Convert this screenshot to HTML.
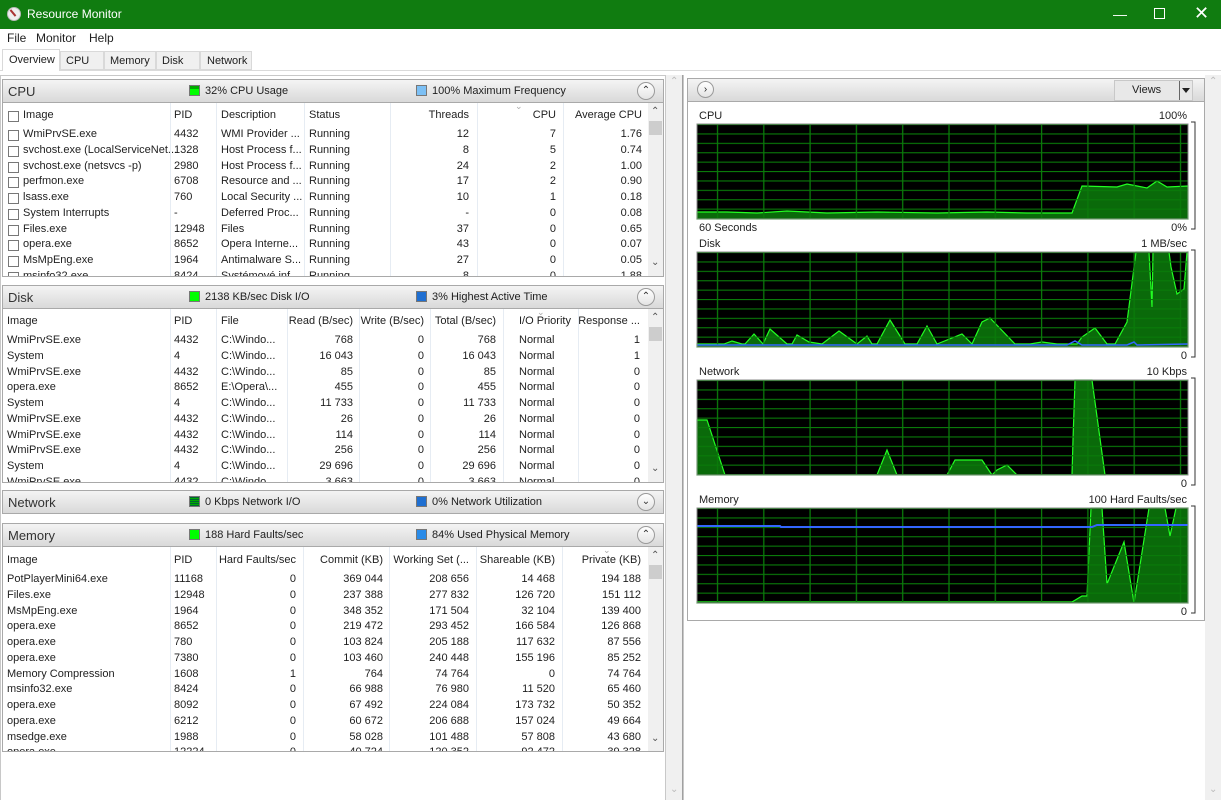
<!DOCTYPE html>
<html><head><meta charset="utf-8"><style>
*{margin:0;padding:0;box-sizing:border-box}
body{width:1221px;height:800px;position:relative;overflow:hidden;background:#fff;font-family:"Liberation Sans",sans-serif;font-size:11px;color:#1e1e1e}
.a{position:absolute;white-space:nowrap}
.hdr{position:absolute;left:2px;width:662px;height:24px;background:linear-gradient(#f4f4f4,#d9d9d9);border:1px solid #a9a9a9;}
.hdr .t{position:absolute;left:5px;top:4px;font-size:13px;color:#333}
.hdr .s{position:absolute;top:5px;font-size:11px}
.sq{position:absolute;top:5px;width:11px;height:11px;border:1px solid #777}
.btn{position:absolute;right:8px;top:2px;width:18px;height:18px;border-radius:50%;border:1px solid #9a9a9a;background:linear-gradient(#fff,#e4e4e4);font-size:10px;text-align:center;line-height:15px;color:#333}
.tbl{position:absolute;left:2px;width:662px;overflow:hidden;background:#fff;border-left:1px solid #a9a9a9;border-right:1px solid #a9a9a9;border-bottom:1px solid #a9a9a9}
.r{position:absolute;left:0;width:646px;height:16px}
.r span{position:absolute;white-space:nowrap;top:1px}
.dv{position:absolute;top:0;width:1px;background:#e6ecf3}
.sb{position:absolute;right:0;top:0;width:15px;background:#f0f0f0}
.cb{display:inline-block;width:11px;height:11px;border:1px solid #777;background:#fff}
.c1{left:5px;top:3px!important}.c2{left:20px}.c3{left:171px}.c4{left:218px}.c5{left:306px}
.c6{left:386px;width:80px;text-align:right}.c7{left:473px;width:80px;text-align:right}.c8{left:559px;width:80px;text-align:right}
.d1{left:4px}.d2{left:171px}.d3{left:218px}.d4{left:270px;width:80px;text-align:right}.d5{left:341px;width:80px;text-align:right}.d6{left:413px;width:80px;text-align:right}.d7{left:516px}.d8{left:557px;width:80px;text-align:right}
.m1{left:4px}.m2{left:171px}.m3{left:213px;width:80px;text-align:right}.m4{left:300px;width:80px;text-align:right}.m5{left:386px;width:80px;text-align:right}.m6{left:472px;width:80px;text-align:right}.m7{left:558px;width:80px;text-align:right}
</style></head><body>
<div class="a" style="left:0;top:0;width:1221px;height:29px;background:#107c10"></div>
<div class="a" style="left:7px;top:7px;width:14px;height:14px;border-radius:50%;background:#eee;border:1px solid #bbb"></div>
<div class="a" style="left:12px;top:9px;width:2px;height:8px;background:#a33;transform:rotate(-40deg)"></div>
<div class="a" style="left:27px;top:7px;color:#fff;font-size:12px">Resource Monitor</div>
<div class="a" style="left:1113px;top:6px;color:#fff;font-size:14px">&#8212;</div>
<div class="a" style="left:1154px;top:8px;width:11px;height:11px;border:1px solid #fff"></div>
<div class="a" style="left:1194px;top:3px;color:#fff;font-size:18px">&#10005;</div>
<div class="a" style="left:7px;top:31px;font-size:12px">File</div>
<div class="a" style="left:36px;top:31px;font-size:12px">Monitor</div>
<div class="a" style="left:89px;top:31px;font-size:12px">Help</div>
<div class="a" style="left:0;top:70px;width:1221px;height:1px;background:#dadada"></div>
<div class="a" style="left:2px;top:49px;width:58px;height:22px;background:#fff;border:1px solid #d9d9d9;border-bottom:none;padding:4px 0 0 6px">Overview</div>
<div class="a" style="left:60px;top:51px;width:44px;height:19px;background:#f0f0f0;border:1px solid #d9d9d9;padding:3px 0 0 5px">CPU</div>
<div class="a" style="left:104px;top:51px;width:52px;height:19px;background:#f0f0f0;border:1px solid #d9d9d9;padding:3px 0 0 5px">Memory</div>
<div class="a" style="left:156px;top:51px;width:44px;height:19px;background:#f0f0f0;border:1px solid #d9d9d9;padding:3px 0 0 5px">Disk</div>
<div class="a" style="left:200px;top:51px;width:52px;height:19px;background:#f0f0f0;border:1px solid #d9d9d9;padding:3px 0 0 6px">Network</div>

<div class="a" style="left:0;top:75px;width:666px;height:725px;border:1px solid #c8c8c8;border-bottom:none"></div>
<div class="a" style="left:666px;top:75px;width:17px;height:725px;background:#f0f0f0;border-right:1px solid #a0a0a0"></div>
<div class="a" style="left:670px;top:76px;color:#bbb;font-size:10px">&#8963;</div>
<div class="a" style="left:670px;top:784px;color:#bbb;font-size:10px">&#8964;</div>

<div class="hdr" style="top:79px"><div class="t">CPU</div>
<div class="sq" style="left:186px;background:linear-gradient(#0a0 0 35%,#0f0 35%)"></div><div class="s" style="left:202px">32% CPU Usage</div>
<div class="sq" style="left:413px;background:#7cc0f5"></div><div class="s" style="left:429px">100% Maximum Frequency</div>
<div class="btn">&#8963;</div></div>
<div class="tbl" style="top:103px;height:174px">
<div class="dv" style="left:167px;height:174px"></div><div class="dv" style="left:213px;height:174px"></div><div class="dv" style="left:301px;height:174px"></div><div class="dv" style="left:387px;height:174px"></div><div class="dv" style="left:474px;height:174px"></div><div class="dv" style="left:560px;height:174px"></div>
<div class="a" style="left:512px;top:-2px;color:#aaa;font-size:9px">&#8964;</div>
<div class="r" style="top:5px"><span class="c1"><i class="cb"></i></span><span class="c2">Image</span><span class="c3">PID</span><span class="c4">Description</span><span class="c5">Status</span><span class="c6">Threads</span><span class="c7">CPU</span><span class="c8">Average CPU</span></div>
<div class="r" style="top:24px"><span class="c1"><i class="cb"></i></span><span class="c2">WmiPrvSE.exe</span><span class="c3">4432</span><span class="c4">WMI Provider ...</span><span class="c5">Running</span><span class="c6">12</span><span class="c7">7</span><span class="c8">1.76</span></div>
<div class="r" style="top:40px"><span class="c1"><i class="cb"></i></span><span class="c2">svchost.exe (LocalServiceNet...</span><span class="c3">1328</span><span class="c4">Host Process f...</span><span class="c5">Running</span><span class="c6">8</span><span class="c7">5</span><span class="c8">0.74</span></div>
<div class="r" style="top:56px"><span class="c1"><i class="cb"></i></span><span class="c2">svchost.exe (netsvcs -p)</span><span class="c3">2980</span><span class="c4">Host Process f...</span><span class="c5">Running</span><span class="c6">24</span><span class="c7">2</span><span class="c8">1.00</span></div>
<div class="r" style="top:71px"><span class="c1"><i class="cb"></i></span><span class="c2">perfmon.exe</span><span class="c3">6708</span><span class="c4">Resource and ...</span><span class="c5">Running</span><span class="c6">17</span><span class="c7">2</span><span class="c8">0.90</span></div>
<div class="r" style="top:87px"><span class="c1"><i class="cb"></i></span><span class="c2">lsass.exe</span><span class="c3">760</span><span class="c4">Local Security ...</span><span class="c5">Running</span><span class="c6">10</span><span class="c7">1</span><span class="c8">0.18</span></div>
<div class="r" style="top:103px"><span class="c1"><i class="cb"></i></span><span class="c2">System Interrupts</span><span class="c3">-</span><span class="c4">Deferred Proc...</span><span class="c5">Running</span><span class="c6">-</span><span class="c7">0</span><span class="c8">0.08</span></div>
<div class="r" style="top:119px"><span class="c1"><i class="cb"></i></span><span class="c2">Files.exe</span><span class="c3">12948</span><span class="c4">Files</span><span class="c5">Running</span><span class="c6">37</span><span class="c7">0</span><span class="c8">0.65</span></div>
<div class="r" style="top:134px"><span class="c1"><i class="cb"></i></span><span class="c2">opera.exe</span><span class="c3">8652</span><span class="c4">Opera Interne...</span><span class="c5">Running</span><span class="c6">43</span><span class="c7">0</span><span class="c8">0.07</span></div>
<div class="r" style="top:150px"><span class="c1"><i class="cb"></i></span><span class="c2">MsMpEng.exe</span><span class="c3">1964</span><span class="c4">Antimalware S...</span><span class="c5">Running</span><span class="c6">27</span><span class="c7">0</span><span class="c8">0.05</span></div>
<div class="r" style="top:166px"><span class="c1"><i class="cb"></i></span><span class="c2">msinfo32.exe</span><span class="c3">8424</span><span class="c4">Systémové inf...</span><span class="c5">Running</span><span class="c6">8</span><span class="c7">0</span><span class="c8">1.88</span></div>
<div class="sb" style="height:174px"><div class="a" style="left:3px;top:3px;color:#555;font-size:10px">&#8963;</div><div class="a" style="left:1px;top:18px;width:13px;height:14px;background:#cdcdcd"></div><div class="a" style="left:3px;top:154px;color:#555;font-size:10px">&#8964;</div></div>
</div>

<div class="hdr" style="top:285px"><div class="t">Disk</div>
<div class="sq" style="left:186px;background:#0f0"></div><div class="s" style="left:202px">2138 KB/sec Disk I/O</div>
<div class="sq" style="left:413px;background:#1f6fd1"></div><div class="s" style="left:429px">3% Highest Active Time</div>
<div class="btn">&#8963;</div></div>
<div class="tbl" style="top:309px;height:174px">
<div class="dv" style="left:167px;height:174px"></div><div class="dv" style="left:213px;height:174px"></div><div class="dv" style="left:284px;height:174px"></div><div class="dv" style="left:356px;height:174px"></div><div class="dv" style="left:427px;height:174px"></div><div class="dv" style="left:500px;height:174px"></div><div class="dv" style="left:575px;height:174px"></div>
<div class="a" style="left:534px;top:-2px;color:#aaa;font-size:9px">&#8964;</div>
<div class="r" style="top:5px"><span class="d1">Image</span><span class="d2">PID</span><span class="d3">File</span><span class="d4">Read (B/sec)</span><span class="d5">Write (B/sec)</span><span class="d6">Total (B/sec)</span><span class="d7">I/O Priority</span><span class="d8">Response ...</span></div>
<div class="r" style="top:24px"><span class="d1">WmiPrvSE.exe</span><span class="d2">4432</span><span class="d3">C:\Windo...</span><span class="d4">768</span><span class="d5">0</span><span class="d6">768</span><span class="d7">Normal</span><span class="d8">1</span></div>
<div class="r" style="top:40px"><span class="d1">System</span><span class="d2">4</span><span class="d3">C:\Windo...</span><span class="d4">16 043</span><span class="d5">0</span><span class="d6">16 043</span><span class="d7">Normal</span><span class="d8">1</span></div>
<div class="r" style="top:56px"><span class="d1">WmiPrvSE.exe</span><span class="d2">4432</span><span class="d3">C:\Windo...</span><span class="d4">85</span><span class="d5">0</span><span class="d6">85</span><span class="d7">Normal</span><span class="d8">0</span></div>
<div class="r" style="top:71px"><span class="d1">opera.exe</span><span class="d2">8652</span><span class="d3">E:\Opera\...</span><span class="d4">455</span><span class="d5">0</span><span class="d6">455</span><span class="d7">Normal</span><span class="d8">0</span></div>
<div class="r" style="top:87px"><span class="d1">System</span><span class="d2">4</span><span class="d3">C:\Windo...</span><span class="d4">11 733</span><span class="d5">0</span><span class="d6">11 733</span><span class="d7">Normal</span><span class="d8">0</span></div>
<div class="r" style="top:103px"><span class="d1">WmiPrvSE.exe</span><span class="d2">4432</span><span class="d3">C:\Windo...</span><span class="d4">26</span><span class="d5">0</span><span class="d6">26</span><span class="d7">Normal</span><span class="d8">0</span></div>
<div class="r" style="top:119px"><span class="d1">WmiPrvSE.exe</span><span class="d2">4432</span><span class="d3">C:\Windo...</span><span class="d4">114</span><span class="d5">0</span><span class="d6">114</span><span class="d7">Normal</span><span class="d8">0</span></div>
<div class="r" style="top:134px"><span class="d1">WmiPrvSE.exe</span><span class="d2">4432</span><span class="d3">C:\Windo...</span><span class="d4">256</span><span class="d5">0</span><span class="d6">256</span><span class="d7">Normal</span><span class="d8">0</span></div>
<div class="r" style="top:150px"><span class="d1">System</span><span class="d2">4</span><span class="d3">C:\Windo...</span><span class="d4">29 696</span><span class="d5">0</span><span class="d6">29 696</span><span class="d7">Normal</span><span class="d8">0</span></div>
<div class="r" style="top:166px"><span class="d1">WmiPrvSE.exe</span><span class="d2">4432</span><span class="d3">C:\Windo...</span><span class="d4">3 663</span><span class="d5">0</span><span class="d6">3 663</span><span class="d7">Normal</span><span class="d8">0</span></div>
<div class="sb" style="height:174px"><div class="a" style="left:3px;top:3px;color:#555;font-size:10px">&#8963;</div><div class="a" style="left:1px;top:18px;width:13px;height:14px;background:#cdcdcd"></div><div class="a" style="left:3px;top:154px;color:#555;font-size:10px">&#8964;</div></div>
</div>

<div class="hdr" style="top:490px"><div class="t">Network</div>
<div class="sq" style="left:186px;background:repeating-linear-gradient(#063 0 1px,#0a0 1px 2px)"></div><div class="s" style="left:202px">0 Kbps Network I/O</div>
<div class="sq" style="left:413px;background:#1f6fd1"></div><div class="s" style="left:429px">0% Network Utilization</div>
<div class="btn">&#8964;</div></div>

<div class="hdr" style="top:523px"><div class="t">Memory</div>
<div class="sq" style="left:186px;background:#0f0"></div><div class="s" style="left:202px">188 Hard Faults/sec</div>
<div class="sq" style="left:413px;background:#2a8be8"></div><div class="s" style="left:429px">84% Used Physical Memory</div>
<div class="btn">&#8963;</div></div>
<div class="tbl" style="top:547px;height:205px">
<div class="dv" style="left:167px;height:205px"></div><div class="dv" style="left:213px;height:205px"></div><div class="dv" style="left:300px;height:205px"></div><div class="dv" style="left:386px;height:205px"></div><div class="dv" style="left:473px;height:205px"></div><div class="dv" style="left:559px;height:205px"></div>
<div class="a" style="left:600px;top:-2px;color:#aaa;font-size:9px">&#8964;</div>
<div class="r" style="top:6px"><span class="m1">Image</span><span class="m2">PID</span><span class="m3">Hard Faults/sec</span><span class="m4">Commit (KB)</span><span class="m5">Working Set (...</span><span class="m6">Shareable (KB)</span><span class="m7">Private (KB)</span></div>
<div class="r" style="top:25px"><span class="m1">PotPlayerMini64.exe</span><span class="m2">11168</span><span class="m3">0</span><span class="m4">369 044</span><span class="m5">208 656</span><span class="m6">14 468</span><span class="m7">194 188</span></div>
<div class="r" style="top:41px"><span class="m1">Files.exe</span><span class="m2">12948</span><span class="m3">0</span><span class="m4">237 388</span><span class="m5">277 832</span><span class="m6">126 720</span><span class="m7">151 112</span></div>
<div class="r" style="top:57px"><span class="m1">MsMpEng.exe</span><span class="m2">1964</span><span class="m3">0</span><span class="m4">348 352</span><span class="m5">171 504</span><span class="m6">32 104</span><span class="m7">139 400</span></div>
<div class="r" style="top:72px"><span class="m1">opera.exe</span><span class="m2">8652</span><span class="m3">0</span><span class="m4">219 472</span><span class="m5">293 452</span><span class="m6">166 584</span><span class="m7">126 868</span></div>
<div class="r" style="top:88px"><span class="m1">opera.exe</span><span class="m2">780</span><span class="m3">0</span><span class="m4">103 824</span><span class="m5">205 188</span><span class="m6">117 632</span><span class="m7">87 556</span></div>
<div class="r" style="top:104px"><span class="m1">opera.exe</span><span class="m2">7380</span><span class="m3">0</span><span class="m4">103 460</span><span class="m5">240 448</span><span class="m6">155 196</span><span class="m7">85 252</span></div>
<div class="r" style="top:120px"><span class="m1">Memory Compression</span><span class="m2">1608</span><span class="m3">1</span><span class="m4">764</span><span class="m5">74 764</span><span class="m6">0</span><span class="m7">74 764</span></div>
<div class="r" style="top:135px"><span class="m1">msinfo32.exe</span><span class="m2">8424</span><span class="m3">0</span><span class="m4">66 988</span><span class="m5">76 980</span><span class="m6">11 520</span><span class="m7">65 460</span></div>
<div class="r" style="top:151px"><span class="m1">opera.exe</span><span class="m2">8092</span><span class="m3">0</span><span class="m4">67 492</span><span class="m5">224 084</span><span class="m6">173 732</span><span class="m7">50 352</span></div>
<div class="r" style="top:167px"><span class="m1">opera.exe</span><span class="m2">6212</span><span class="m3">0</span><span class="m4">60 672</span><span class="m5">206 688</span><span class="m6">157 024</span><span class="m7">49 664</span></div>
<div class="r" style="top:183px"><span class="m1">msedge.exe</span><span class="m2">1988</span><span class="m3">0</span><span class="m4">58 028</span><span class="m5">101 488</span><span class="m6">57 808</span><span class="m7">43 680</span></div>
<div class="r" style="top:198px"><span class="m1">opera.exe</span><span class="m2">12224</span><span class="m3">0</span><span class="m4">40 724</span><span class="m5">120 352</span><span class="m6">92 472</span><span class="m7">39 328</span></div>
<div class="sb" style="height:205px"><div class="a" style="left:3px;top:3px;color:#555;font-size:10px">&#8963;</div><div class="a" style="left:1px;top:18px;width:13px;height:14px;background:#cdcdcd"></div><div class="a" style="left:3px;top:186px;color:#555;font-size:10px">&#8964;</div></div>
</div>

<div class="a" style="left:683px;top:75px;width:522px;height:725px;border-left:1px solid #c8c8c8"></div>
<div class="a" style="left:1205px;top:75px;width:16px;height:725px;background:#f0f0f0"></div>
<div class="a" style="left:1209px;top:76px;color:#bbb;font-size:10px">&#8963;</div>
<div class="a" style="left:1209px;top:784px;color:#bbb;font-size:10px">&#8964;</div>
<div class="a" style="left:687px;top:78px;width:518px;height:543px;border:1px solid #a9a9a9"></div>
<div class="a" style="left:687px;top:78px;width:518px;height:24px;background:linear-gradient(#f4f4f4,#d9d9d9);border:1px solid #a9a9a9"></div>
<div class="a" style="left:697px;top:81px;width:17px;height:17px;border-radius:50%;border:1px solid #9a9a9a;background:linear-gradient(#fff,#e4e4e4);font-size:10px;text-align:center;line-height:15px">&#8250;</div>
<div class="a" style="left:1114px;top:80px;width:79px;height:21px;background:#e8e8e8;border:1px solid #c8c8c8"></div>
<div class="a" style="left:1132px;top:84px">Views</div>
<div class="a" style="left:1179px;top:81px;width:1px;height:19px;background:#666"></div>
<div class="a" style="left:1182px;top:88px;width:0;height:0;border-left:4px solid transparent;border-right:4px solid transparent;border-top:5px solid #222"></div>

<svg class="a" style="left:0;top:0" width="1221" height="800">
<defs>
<pattern id="g" x="0" y="0" width="46.3" height="9.4" patternUnits="userSpaceOnUse"><path d="M20.5 0V9.4M0 0.5H46.3" stroke="#0a7a0a" stroke-width="1.3" fill="none"/></pattern>
</defs>
<g font-family="Liberation Sans" font-size="11" fill="#1e1e1e">
<text x="699" y="119">CPU</text><text x="1187" y="119" text-anchor="end">100%</text>
<text x="699" y="231">60 Seconds</text><text x="1187" y="231" text-anchor="end">0%</text>
<text x="699" y="247">Disk</text><text x="1187" y="247" text-anchor="end">1 MB/sec</text>
<text x="1187" y="359" text-anchor="end">0</text>
<text x="699" y="375">Network</text><text x="1187" y="375" text-anchor="end">10 Kbps</text>
<text x="1187" y="487" text-anchor="end">0</text>
<text x="699" y="503">Memory</text><text x="1187" y="503" text-anchor="end">100 Hard Faults/sec</text>
<text x="1187" y="615" text-anchor="end">0</text>
</g>
<g stroke="#333" fill="none"><path d="M1191 122H1195V229H1191M1191 250H1195V357H1191M1191 378H1195V485H1191M1191 506H1195V613H1191"/></g>
<g transform="translate(697,124)">
<rect width="491" height="95" fill="#000"/>
<path d="M0 88L30 88L60 89L90 87L130 89L180 88L240 89L290 88L330 89L375 89L385 62L420 63L430 60L450 64L460 57L470 63L491 62L491 95L0 95Z" fill="#0a6a0a" stroke="#2f2" stroke-width="1.2"/>
<rect width="491" height="95" fill="url(#g)"/><rect width="491" height="95" fill="none" stroke="#888"/>
</g>
<g transform="translate(697,252)">
<rect width="491" height="95" fill="#000"/>
<path d="M0 92L27 92L35 89L45 92L48 92L57 82L66 92L73 77L90 92L95 92L100 83L112 90L125 92L142 79L160 92L170 84L175 92L180 92L193 68L208 92L215 92L220 92L230 74L240 92L255 86L265 82L275 92L285 70L293 66L318 92L333 92L345 90L360 92L380 92L385 85L398 76L410 92L418 92L430 70L439 0L452 0L455 55L456 0L472 0L474 15L480 42L487 37L490 0L491 0L491 95L0 95Z" fill="#0a6a0a" stroke="#2f2" stroke-width="1.2"/>
<rect width="491" height="95" fill="url(#g)"/>
<path d="M0 93L370 93L378 89L385 93L430 93L437 90L440 93L491 92" stroke="#36f" stroke-width="1.5" fill="none"/>
<rect width="491" height="95" fill="none" stroke="#888"/>
</g>
<g transform="translate(697,380)">
<rect width="491" height="95" fill="#000"/>
<path d="M0 40L10 40L28 95L180 95L190 70L200 95L250 95L258 80L285 80L295 95L300 90L310 85L320 95L375 95L376 60L378 0L395 0L408 95L0 95Z" fill="#0a6a0a" stroke="#2f2" stroke-width="1.2"/>
<rect width="491" height="95" fill="url(#g)"/><rect width="491" height="95" fill="none" stroke="#888"/>
</g>
<g transform="translate(697,508)">
<rect width="491" height="95" fill="#000"/>
<path d="M0 94L375 94L385 88L390 88L394 0L401 0L405 0L410 76L427 34L437 95L452 0L468 0L473 28L479 0L491 0L491 95L0 95Z" fill="#0a6a0a" stroke="#2f2" stroke-width="1.2"/>
<rect width="491" height="95" fill="url(#g)"/>
<path d="M0 18L83 18L84 19L395 19L400 17L491 17" stroke="#36f" stroke-width="2" fill="none"/>
<rect width="491" height="95" fill="none" stroke="#888"/>
</g>
</svg>
</body></html>
